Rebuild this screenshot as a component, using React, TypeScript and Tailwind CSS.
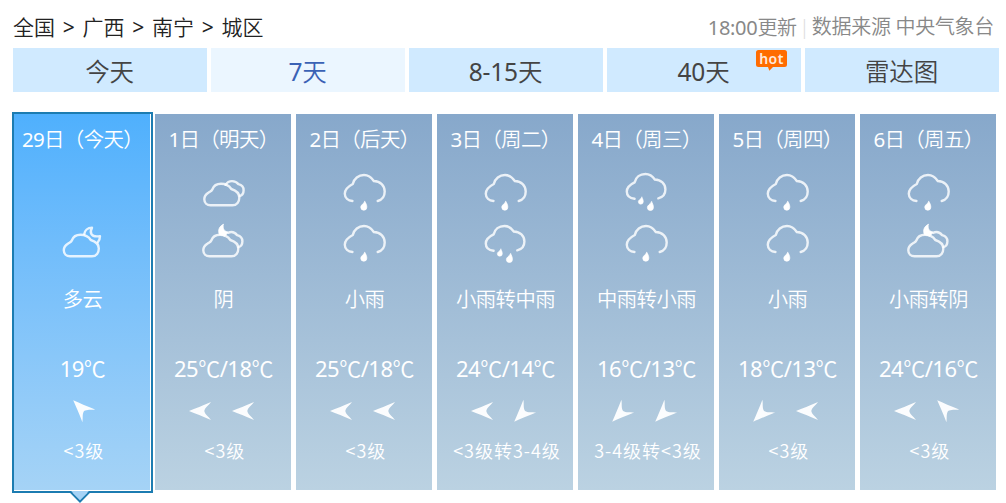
type Sky = "none" | "overcast" | "overcastNight" | "cloudyNight" | "lightRain" | "rain";
type Wind = "w" | "nw" | "sw";

interface Day {
  date: string;
  day: Sky;
  night: Sky;
  text: string;
  temp: string;
  winds: Wind[];
  level: string;
}

const days: Day[] = [
  { date: "29日（今天）", day: "none", night: "cloudyNight", text: "多云", temp: "19℃", winds: ["nw"], level: "<3级" },
  { date: "1日（明天）", day: "overcast", night: "overcastNight", text: "阴", temp: "25℃/18℃", winds: ["w", "w"], level: "<3级" },
  { date: "2日（后天）", day: "lightRain", night: "lightRain", text: "小雨", temp: "25℃/18℃", winds: ["w", "w"], level: "<3级" },
  { date: "3日（周二）", day: "lightRain", night: "rain", text: "小雨转中雨", temp: "24℃/14℃", winds: ["w", "sw"], level: "<3级转3-4级" },
  { date: "4日（周三）", day: "rain", night: "lightRain", text: "中雨转小雨", temp: "16℃/13℃", winds: ["sw", "sw"], level: "3-4级转<3级" },
  { date: "5日（周四）", day: "lightRain", night: "lightRain", text: "小雨", temp: "18℃/13℃", winds: ["sw", "w"], level: "<3级" },
  { date: "6日（周五）", day: "lightRain", night: "overcastNight", text: "小雨转阴", temp: "24℃/16℃", winds: ["w", "nw"], level: "<3级" },
];

const tabs = ["今天", "7天", "8-15天", "40天", "雷达图"];
const crumbs = ["全国", "广西", "南宁", "城区"];

const frontCloud =
  "M11.5 37.3H33.5C38 37.3 40.3 33.5 40.3 29.5C40.3 24.5 36.5 22.3 32.3 21C30 17.5 26 15.8 22 15.8C17.5 15.8 14.6 18 13.3 21.5C12.7 23.2 11.3 23.4 9.3 24.8C6.6 26.6 5.3 28.4 5.3 31.2C5.3 34.8 8 37.3 11.5 37.3Z";

// Digits and separators are set in the regular weight, Chinese text stays lighter
function Mixed({ text }: { text: string }) {
  return (
    <>
      {text.split(/([0-9:/-]+)/).filter(Boolean).map((part, i) =>
        /^[0-9:/-]/.test(part) ? (
          <span key={i} className="font-normal">{part}</span>
        ) : (
          <span key={i} className="font-['Noto_Sans_CJK_SC',sans-serif]">{part}</span>
        )
      )}
    </>
  );
}

function SkyIcon({ sky }: { sky: Sky }) {
  return (
    <svg
      width="48"
      height="48"
      viewBox="0 0 48 48"
      fill="none"
      stroke="#fff"
      strokeOpacity="0.82"
      strokeWidth="2.4"
      strokeLinecap="round"
      strokeLinejoin="round"
    >
      {sky === "overcast" && (
        <>
          <path d={frontCloud} />
          <path d="M26.5 16.8C28 14.4 30.3 13.1 33 13.1C35.8 13.1 38 14.2 39.5 16.2C43 17 44.6 19.2 44.6 22.2C44.6 25.2 43.3 27.3 40.7 28" />
        </>
      )}
      {sky === "overcastNight" && (
        <>
          <path d={frontCloud} transform="translate(-1 0)" />
          <path d="M29 13.8C32.5 12.2 36 13.3 38.2 16.2C41.7 17.2 43.4 19.4 43.4 22.3C43.4 25.3 42 27.5 39.4 28.2" />
          <path d="M24.2 5.5C23.6 9.8 25.2 12.3 28.6 12.8C28.3 14.5 27 16.4 25.6 17.2L20.3 15.4C18.8 11.2 20.2 7.2 24.2 5.5Z" fill="#fff" strokeWidth="1" />
        </>
      )}
      {sky === "cloudyNight" && (
        <>
          <path d={frontCloud} transform="translate(0.5 0)" />
          <path d="M26.3 15.2C26.6 11.4 29.6 8.8 34 8.8C31.6 12.8 32.2 18.8 42 17.1C42 19.5 41.4 21.6 39.8 23.3" />
        </>
      )}
      {sky === "lightRain" && (
        <>
          <path d="M12.5 33C8.2 32.6 4.8 30 4.8 25.7C4.8 20.7 8.6 18.2 12.8 16C14 10.6 18.5 7 24 7C28.2 7 31 8.8 33.8 13C40.4 13.2 44.7 17.6 44.7 23.6C44.7 28.3 42 31.9 37.7 33" />
          <path d="M24.8 33.6C26 35.2 26.9 37.4 26.8 39.2A3 3 0 0 1 20.8 39.2C20.8 37 23.2 36.4 24.8 33.6Z" fill="#fff" strokeWidth="0.9" />
        </>
      )}
      {sky === "rain" && (
        <>
          <path d="M12.6 31.8C8.4 31.2 4.8 29 4.8 24.4C4.8 19.6 8.6 17.4 12.6 15.4C13.8 10.2 18 7 23.4 7C27.4 7 30.2 8.6 32.8 12.5C39 12.8 43.4 16.8 43.4 22.6C43.4 27.2 40.6 30.4 36.3 31.4" />
          <path d="M19.9 30.2C20.8 31.8 21.3 33.2 21.3 34.7A2.5 2.5 0 0 1 16.3 34.7C16.3 33 18.6 32.4 19.9 30.2Z" fill="#fff" strokeWidth="0.7" />
          <path d="M29.6 34.8C30.8 36.6 31.4 38.8 31.4 40.5A3 3 0 0 1 25.4 40.5C25.4 38.2 28.2 37.4 29.6 34.8Z" fill="#fff" strokeWidth="0.9" />
        </>
      )}
    </svg>
  );
}

const windTransform: Record<Wind, string> = {
  w: "translate(12 12)",
  nw: "translate(9 9) rotate(45)",
  sw: "translate(9 15) rotate(-45)",
};

function WindIcon({ wind }: { wind: Wind }) {
  return (
    <svg width="24" height="24" viewBox="0 0 24 24" fill="#fff" fillOpacity="0.95">
      <path d="M-11 0C-5 -2.4 3 -5.4 11 -9C8.5 -5.5 5 -3.5 4.3 0C5 3.5 8.5 5.5 11 9C3 5.4 -5 2.4 -11 0Z" transform={windTransform[wind]} />
    </svg>
  );
}

function HotBadge() {
  return (
    <span className="absolute left-[149px] top-[2px] h-[21px] w-[31px]">
      <svg className="absolute inset-0" width="31" height="21" viewBox="0 0 31 21">
        <path d="M2.5 0H28.5Q31 0 31 2.5V14.5Q31 17 28.5 17H17L13.3 20.8L12 17H2.5Q0 17 0 14.5V2.5Q0 0 2.5 0Z" fill="#ff6c00" />
      </svg>
      <span className="absolute inset-x-0 top-0 text-center font-['Noto_Sans'] text-[14px] leading-[17px] font-semibold tracking-[0.4px] text-[#ffe9dc]">
        hot
      </span>
    </span>
  );
}

function DayCard({ item, active }: { item: Day; active: boolean }) {
  return (
    <li
      className={
        "relative flex h-[376px] w-[136px] flex-col items-center whitespace-nowrap text-white " +
        (active
          ? "bg-linear-to-b from-[#4fb0fd] to-[#a5d3f6]"
          : "bg-linear-to-b from-[#87a8cb] to-[#bbd2e2]")
      }
    >
      {active && (
        <>
          <span className="absolute -top-[2px] -left-[2px] h-[381px] w-[141px] border-2 border-[#1c7cb1]" />
          <svg className="absolute top-[377px] left-[55px]" width="22" height="12" viewBox="0 0 22 12">
            <path d="M2 0L11 10.3L20 0Z" fill="#a5d3f6" />
            <path d="M0.8 0.3L11 10.6L21.2 0.3" fill="none" stroke="#1c7cb1" strokeWidth="1.8" />
          </svg>
        </>
      )}
      <h2 className="mt-[9px] ml-px h-[30px] text-[20.5px] leading-[30px] tracking-[-0.7px]">
        <Mixed text={item.date} />
      </h2>
      <div className={item.day === "rain" ? "mt-[14px] mb-px h-[48px]" : "mt-[15px] h-[48px]"}>
        <SkyIcon sky={item.day} />
      </div>
      <div className="mt-[3px] h-[48px]">
        <SkyIcon sky={item.night} />
      </div>
      <p className="mt-[17px] ml-px h-[30px] text-[20.3px] leading-[30px] tracking-[-0.5px]">{item.text}</p>
      <p className="mt-[38px] ml-px h-[30px] text-[22px] leading-[30px] tracking-[-0.5px]">
        <Mixed text={item.temp} />
      </p>
      <div className={"mt-[17px] flex h-6 gap-[19px] " + (active ? "ml-[4px]" : "mr-[3px]")}>
        {item.winds.map((wind, i) => (
          <WindIcon key={i} wind={wind} />
        ))}
      </div>
      <p className="mt-[12px] ml-[4px] h-[30px] font-['Noto_Sans_CJK_SC',sans-serif] text-[18px] leading-[30px] tracking-[1px]">
        {item.level}
      </p>
    </li>
  );
}

export default function App() {
  return (
    <main className="h-[503px] w-[1006px] overflow-hidden bg-white pl-[13px] font-['Noto_Sans','Noto_Sans_CJK_SC',sans-serif] font-[350]">
      <header className="flex h-12 items-center justify-between pt-[6px] pr-3 whitespace-nowrap">
        <nav className="flex text-[21px] leading-[30px] text-[#222]">
          {crumbs.map((name, i) => (
            <span key={name} className="flex">
              {i > 0 && <span className="w-[27.5px] text-center font-normal">&gt;</span>}
              {name}
            </span>
          ))}
        </nav>
        <p className="flex text-[20px] leading-[30px] tracking-[-0.3px] text-[#888]">
          <span>
            <Mixed text="18:00更新" />
          </span>
          <span className="w-[15px] text-center text-[#ddd]">|</span>
          <span>数据来源 中央气象台</span>
        </p>
      </header>

      <ul className="flex gap-1">
        {tabs.map((tab) => (
          <li
            key={tab}
            className={
              "relative h-11 w-[194px] pr-px text-center text-[24.5px] leading-[46px] tracking-[-0.2px] " +
              (tab === "7天" ? "bg-[#ebf6ff] text-[#3a62b5]" : "bg-[#d0eaff] text-[#444]")
            }
          >
            <Mixed text={tab} />
            {tab === "40天" && <HotBadge />}
          </li>
        ))}
      </ul>

      <ul className="mt-[22px] ml-px flex gap-[5px]">
        {days.map((item, i) => (
          <DayCard key={item.date} item={item} active={i === 0} />
        ))}
      </ul>
    </main>
  );
}
